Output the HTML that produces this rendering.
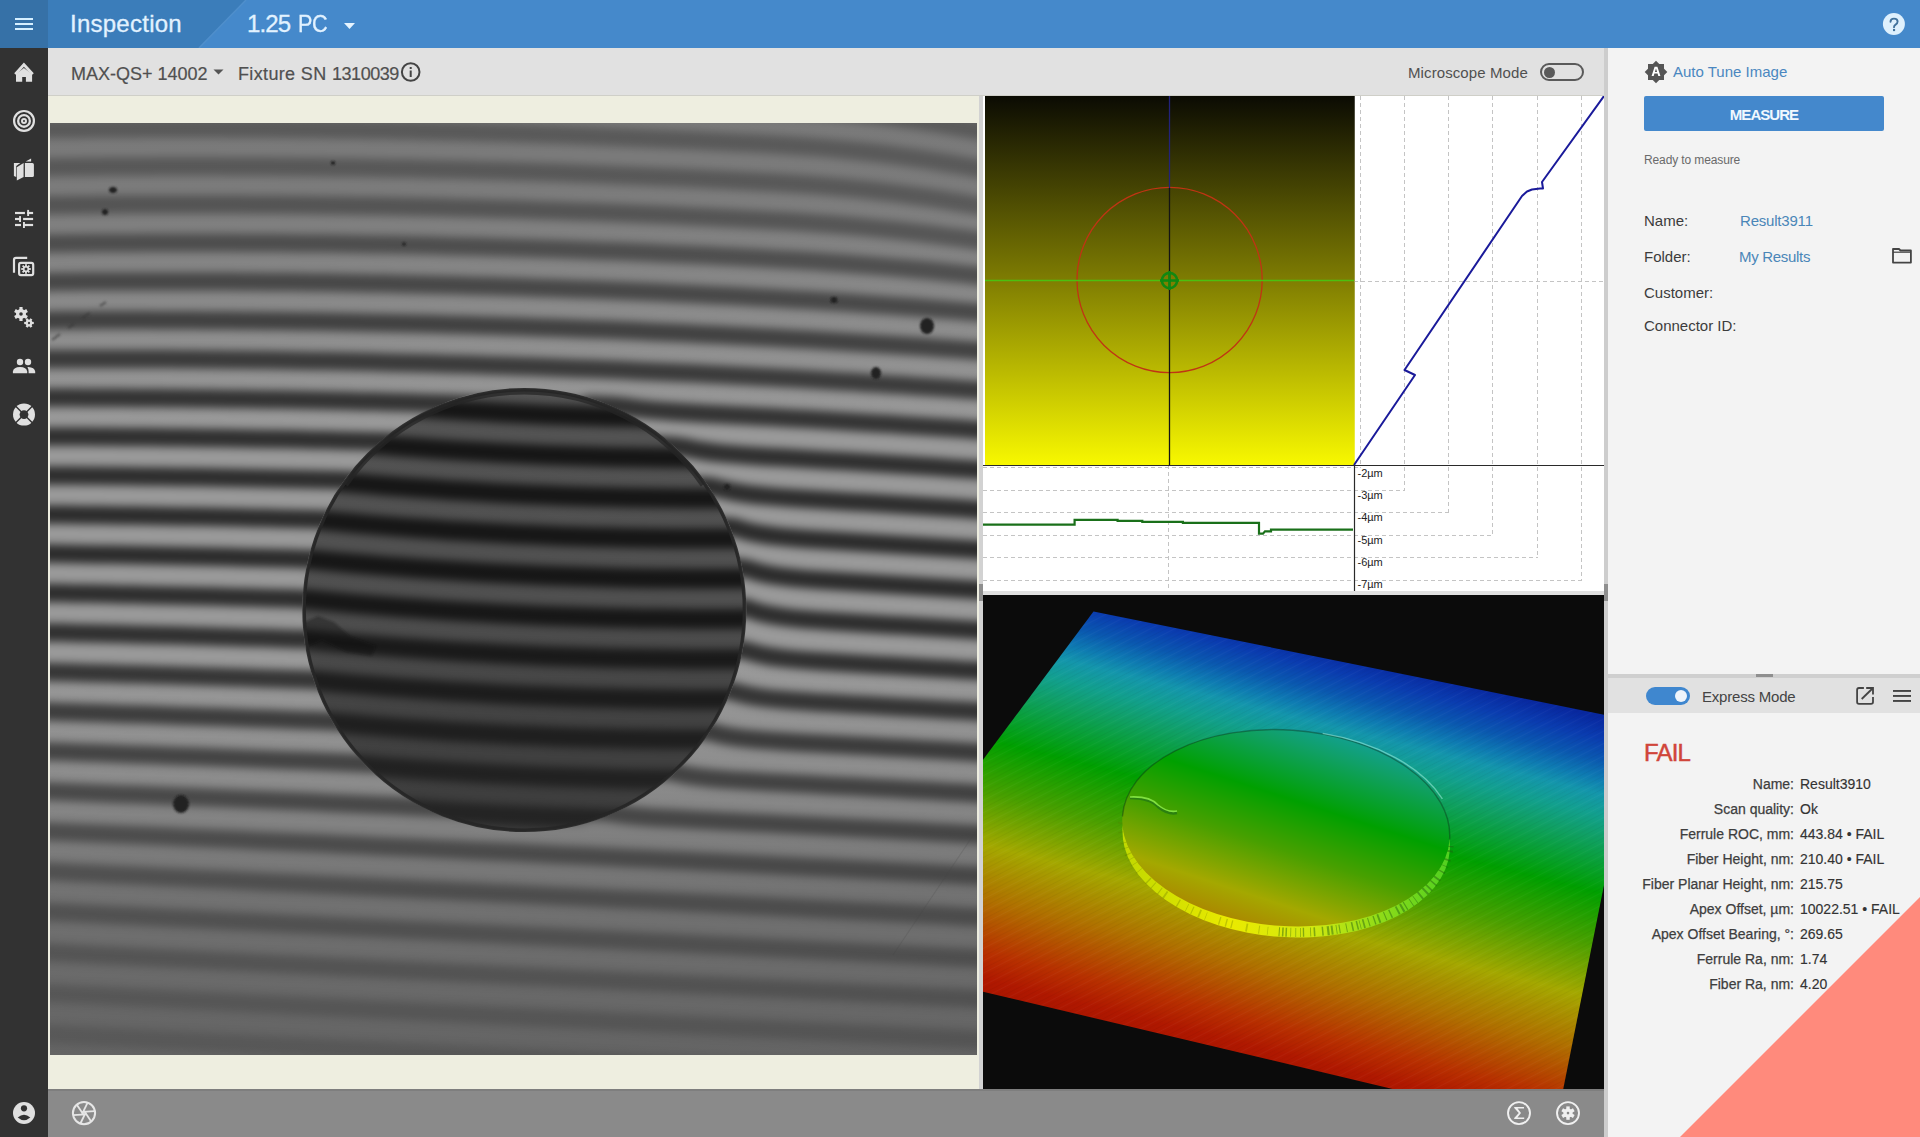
<!DOCTYPE html>
<html><head><meta charset="utf-8">
<style>
*{box-sizing:border-box;margin:0;padding:0}
html,body{width:1920px;height:1137px;overflow:hidden;background:#f3f3f3;font-family:"Liberation Sans",sans-serif}
.a{position:absolute}
.t{position:absolute;white-space:nowrap;line-height:1}
</style></head><body>
<!-- top bar -->
<div class="a" style="left:0;top:0;width:1920px;height:48px;background:#4589cb"></div>
<svg class="a" style="left:0;top:0" width="260" height="48"><polygon points="0,0 246,0 199,48 0,48" fill="#3b7dba"/><line x1="246" y1="0" x2="199" y2="48" stroke="#4f8fcc" stroke-width="1.5"/><rect x="0" y="0" width="48" height="48" fill="#3671a7"/>
<rect x="15" y="18" width="18" height="2" fill="#d6efff"/><rect x="15" y="23" width="18" height="2" fill="#d6efff"/><rect x="15" y="28" width="18" height="2" fill="#d6efff"/></svg>
<div class="t" style="left:70px;top:12px;font-size:24px;letter-spacing:0.25px;color:#e2f2ff;-webkit-text-stroke:0.3px #e2f2ff">Inspection</div>
<div class="t" style="left:247px;top:12px;font-size:24px;letter-spacing:-0.9px;color:#e2f2ff;-webkit-text-stroke:0.3px #e2f2ff">1.25</div><div class="t" style="left:297.5px;top:12px;font-size:24px;letter-spacing:-0.5px;transform:scaleX(0.9);transform-origin:0 0;color:#e2f2ff;-webkit-text-stroke:0.3px #e2f2ff">PC</div>
<svg class="a" style="left:344px;top:23px" width="12" height="7"><polygon points="0,0 11,0 5.5,6" fill="#e6f4ff"/></svg>
<svg class="a" style="left:1882px;top:13px" width="24" height="24" viewBox="1882 13 24 24"><circle cx="1893.9" cy="24" r="11" fill="#def0fd"/><path d="M1890.5,21.8 Q1890.6,18.6 1894,18.6 Q1897.6,18.6 1897.6,21.6 Q1897.6,23.4 1895.6,24.6 Q1894,25.6 1894,27.2" fill="none" stroke="#41719c" stroke-width="1.9" stroke-linecap="round"/><rect x="1893" y="29" width="2.1" height="2.1" fill="#41719c"/></svg>

<!-- sidebar -->
<div class="a" style="left:0;top:48px;width:48px;height:1089px;background:#323232"></div>

<!-- sub header -->
<div class="a" style="left:48px;top:48px;width:1556px;height:48px;background:#e1e1e1;border-bottom:1px solid #cfcfc8"></div>
<div class="t" style="left:71px;top:65px;font-size:18px;color:#505050;-webkit-text-stroke:0.2px #505050">MAX-QS+ 14002</div>
<svg class="a" style="left:213px;top:69px" width="12" height="7"><polygon points="0.5,0.5 10.5,0.5 5.5,5.5" fill="#555"/></svg>
<div class="t" style="left:238px;top:65px;font-size:18px;letter-spacing:0.35px;color:#505050;-webkit-text-stroke:0.2px #505050">Fixture SN</div>
<div class="t" style="left:332px;top:65px;font-size:18px;letter-spacing:-0.45px;color:#505050;-webkit-text-stroke:0.2px #505050">1310039</div>
<svg class="a" style="left:399px;top:61px" width="24" height="24"><circle cx="11.7" cy="11" r="8.8" fill="none" stroke="#444" stroke-width="2"/><rect x="10.7" y="9.5" width="2" height="6.5" fill="#444"/><rect x="10.7" y="6" width="2" height="2" fill="#444"/></svg>
<div class="t" style="left:1408px;top:65px;font-size:15px;letter-spacing:0.1px;color:#505050">Microscope Mode</div>
<div class="a" style="left:1540px;top:63px;width:44px;height:18px;border:2px solid #5a5a5a;border-radius:9px"></div>
<div class="a" style="left:1544px;top:67px;width:11px;height:11px;background:#5a5a5a;border-radius:50%"></div>

<!-- cream image area -->
<div class="a" style="left:48px;top:96px;width:931px;height:993px;background:#eeeee0"></div>
<!--INTERF--><svg class="a" style="left:50px;top:123px" width="927" height="932" viewBox="50 123 927 932">
<defs>
<filter id="bl" x="-2%" y="-5%" width="104%" height="110%"><feGaussianBlur stdDeviation="4.4"/></filter>
<filter id="bl2" x="-50%" y="-50%" width="200%" height="200%"><feGaussianBlur stdDeviation="1"/></filter>
<linearGradient id="ibg" gradientUnits="userSpaceOnUse" x1="0" y1="123" x2="0" y2="1055"><stop offset="0.000" stop-color="rgb(122,122,122)"/><stop offset="0.072" stop-color="rgb(124,124,124)"/><stop offset="0.190" stop-color="rgb(138,138,138)"/><stop offset="0.324" stop-color="rgb(154,154,154)"/><stop offset="0.447" stop-color="rgb(154,154,154)"/><stop offset="0.576" stop-color="rgb(154,154,154)"/><stop offset="0.705" stop-color="rgb(140,140,140)"/><stop offset="0.828" stop-color="rgb(114,114,114)"/><stop offset="0.941" stop-color="rgb(104,104,104)"/><stop offset="1.000" stop-color="rgb(100,100,100)"/></linearGradient>
<clipPath id="fib"><circle cx="524.3" cy="610" r="221"/></clipPath>
<mask id="outm"><rect x="50" y="123" width="927" height="932" fill="#fff"/><circle cx="524.3" cy="610" r="222" fill="#000"/></mask>
<linearGradient id="fbg" gradientUnits="userSpaceOnUse" x1="0" y1="388" x2="0" y2="832"><stop offset="0.000" stop-color="rgb(84,84,84)"/><stop offset="0.477" stop-color="rgb(80,80,80)"/><stop offset="0.748" stop-color="rgb(66,66,66)"/><stop offset="1.000" stop-color="rgb(60,60,60)"/></linearGradient>
</defs>
<rect x="50" y="123" width="927" height="932" fill="url(#ibg)"/>
<g mask="url(#outm)"><g filter="url(#bl)" fill="none" stroke="#000" stroke-width="18.5"><polyline points="38,53.6 50,53.5 62,53.3 74,53.2 86,53.1 98,53.0 110,52.9 122,52.8 134,52.7 146,52.7 158,52.6 170,52.6 182,52.6 194,52.6 206,52.6 218,52.6 230,52.7 242,52.7 254,52.8 266,52.9 278,53.0 290,53.1 302,53.2 314,53.4 326,53.5 338,53.7 350,53.9 362,54.0 374,54.3 386,54.5 398,54.7 410,54.9 422,55.2 434,55.5 446,55.8 458,56.1 470,56.4 482,56.7 494,57.0 506,57.4 518,57.8 530,58.1 542,58.5 554,59.0 566,59.4 578,59.8 590,60.3 602,60.7 614,61.2 626,61.7 638,62.2 650,62.7 662,63.2 674,63.8 686,64.3 698,64.9 710,65.5 722,66.1 734,66.7 746,67.3 758,68.0 770,68.6 782,69.3 794,70.0 806,70.8 818,71.7 830,72.7 842,73.8 854,75.0 866,76.3 878,77.7 890,79.1 902,80.7 914,82.3 926,84.1 938,85.9 950,87.8 962,89.8 974,91.9 986,94.1" stroke-opacity="0.264"/><polyline points="38,91.4 50,91.2 62,91.1 74,91.0 86,90.8 98,90.7 110,90.6 122,90.6 134,90.5 146,90.4 158,90.4 170,90.4 182,90.4 194,90.4 206,90.4 218,90.4 230,90.5 242,90.5 254,90.6 266,90.7 278,90.8 290,90.9 302,91.0 314,91.1 326,91.3 338,91.5 350,91.6 362,91.8 374,92.0 386,92.2 398,92.5 410,92.7 422,93.0 434,93.3 446,93.5 458,93.8 470,94.2 482,94.5 494,94.8 506,95.2 518,95.5 530,95.9 542,96.3 554,96.7 566,97.1 578,97.6 590,98.0 602,98.5 614,99.0 626,99.5 638,100.0 650,100.5 662,101.0 674,101.5 686,102.1 698,102.7 710,103.3 722,103.9 734,104.5 746,105.1 758,105.7 770,106.4 782,107.0 794,107.8 806,108.6 818,109.5 830,110.5 842,111.6 854,112.8 866,114.1 878,115.4 890,116.9 902,118.5 914,120.1 926,121.8 938,123.7 950,125.6 962,127.6 974,129.7 986,131.9" stroke-opacity="0.264"/><polyline points="38,129.3 50,129.1 62,129.0 74,128.9 86,128.7 98,128.6 110,128.5 122,128.5 134,128.4 146,128.3 158,128.3 170,128.3 182,128.3 194,128.3 206,128.3 218,128.3 230,128.4 242,128.4 254,128.5 266,128.6 278,128.7 290,128.8 302,128.9 314,129.0 326,129.2 338,129.4 350,129.5 362,129.7 374,129.9 386,130.1 398,130.4 410,130.6 422,130.9 434,131.2 446,131.4 458,131.7 470,132.1 482,132.4 494,132.7 506,133.1 518,133.4 530,133.8 542,134.2 554,134.6 566,135.0 578,135.5 590,135.9 602,136.4 614,136.9 626,137.4 638,137.9 650,138.4 662,138.9 674,139.4 686,140.0 698,140.6 710,141.2 722,141.8 734,142.4 746,143.0 758,143.6 770,144.3 782,144.9 794,145.7 806,146.5 818,147.4 830,148.4 842,149.5 854,150.7 866,152.0 878,153.3 890,154.8 902,156.4 914,158.0 926,159.7 938,161.6 950,163.5 962,165.5 974,167.6 986,169.8" stroke-opacity="0.269"/><polyline points="38,167.3 50,167.2 62,167.0 74,166.9 86,166.8 98,166.7 110,166.6 122,166.5 134,166.4 146,166.4 158,166.3 170,166.3 182,166.3 194,166.3 206,166.3 218,166.3 230,166.4 242,166.4 254,166.5 266,166.6 278,166.7 290,166.8 302,166.9 314,167.1 326,167.2 338,167.4 350,167.6 362,167.7 374,168.0 386,168.2 398,168.4 410,168.6 422,168.9 434,169.2 446,169.5 458,169.8 470,170.1 482,170.4 494,170.7 506,171.1 518,171.5 530,171.8 542,172.2 554,172.6 566,173.1 578,173.5 590,174.0 602,174.4 614,174.9 626,175.4 638,175.9 650,176.4 662,176.9 674,177.5 686,178.0 698,178.6 710,179.2 722,179.8 734,180.4 746,181.0 758,181.7 770,182.3 782,183.0 794,183.7 806,184.5 818,185.4 830,186.4 842,187.5 854,188.6 866,189.9 878,191.2 890,192.6 902,194.2 914,195.8 926,197.4 938,199.2 950,201.1 962,203.0 974,205.0 986,207.2" stroke-opacity="0.286"/><polyline points="38,205.5 50,205.3 62,205.2 74,205.0 86,204.9 98,204.8 110,204.7 122,204.6 134,204.6 146,204.5 158,204.5 170,204.5 182,204.5 194,204.5 206,204.5 218,204.5 230,204.5 242,204.6 254,204.7 266,204.7 278,204.8 290,205.0 302,205.1 314,205.2 326,205.4 338,205.5 350,205.7 362,205.9 374,206.1 386,206.3 398,206.6 410,206.8 422,207.1 434,207.3 446,207.6 458,207.9 470,208.2 482,208.6 494,208.9 506,209.3 518,209.6 530,210.0 542,210.4 554,210.8 566,211.2 578,211.7 590,212.1 602,212.6 614,213.0 626,213.5 638,214.0 650,214.6 662,215.1 674,215.6 686,216.2 698,216.8 710,217.3 722,217.9 734,218.5 746,219.2 758,219.8 770,220.5 782,221.1 794,221.8 806,222.6 818,223.4 830,224.3 842,225.3 854,226.3 866,227.4 878,228.6 890,229.8 902,231.0 914,232.4 926,233.8 938,235.2 950,236.8 962,238.3 974,240.0 986,241.7" stroke-opacity="0.333"/><polyline points="38,243.8 50,243.6 62,243.5 74,243.3 86,243.2 98,243.1 110,243.0 122,242.9 134,242.9 146,242.8 158,242.8 170,242.7 182,242.7 194,242.7 206,242.7 218,242.8 230,242.8 242,242.9 254,242.9 266,243.0 278,243.1 290,243.2 302,243.4 314,243.5 326,243.6 338,243.8 350,244.0 362,244.2 374,244.4 386,244.6 398,244.8 410,245.1 422,245.3 434,245.6 446,245.9 458,246.2 470,246.5 482,246.8 494,247.2 506,247.5 518,247.9 530,248.3 542,248.7 554,249.1 566,249.5 578,249.9 590,250.4 602,250.9 614,251.3 626,251.8 638,252.3 650,252.8 662,253.4 674,253.9 686,254.5 698,255.0 710,255.6 722,256.2 734,256.8 746,257.5 758,258.1 770,258.7 782,259.4 794,260.1 806,260.8 818,261.6 830,262.4 842,263.3 854,264.2 866,265.1 878,266.1 890,267.1 902,268.1 914,269.2 926,270.3 938,271.5 950,272.7 962,273.9 974,275.2 986,276.5" stroke-opacity="0.407"/><polyline points="38,282.1 50,281.9 62,281.8 74,281.7 86,281.6 98,281.6 110,281.5 122,281.4 134,281.4 146,281.4 158,281.4 170,281.4 182,281.4 194,281.4 206,281.5 218,281.5 230,281.6 242,281.7 254,281.8 266,281.9 278,282.0 290,282.1 302,282.3 314,282.4 326,282.6 338,282.8 350,283.0 362,283.2 374,283.4 386,283.6 398,283.9 410,284.2 422,284.4 434,284.7 446,285.0 458,285.3 470,285.7 482,286.0 494,286.3 506,286.7 518,287.1 530,287.5 542,287.9 554,288.3 566,288.7 578,289.2 590,289.6 602,290.1 614,290.6 626,291.1 638,291.6 650,292.1 662,292.6 674,293.2 686,293.7 698,294.3 710,294.9 722,295.5 734,296.1 746,296.7 758,297.4 770,298.0 782,298.7 794,299.4 806,300.1 818,300.8 830,301.5 842,302.3 854,303.1 866,303.9 878,304.7 890,305.6 902,306.4 914,307.3 926,308.2 938,309.2 950,310.1 962,311.1 974,312.1 986,313.1" stroke-opacity="0.476"/><polyline points="38,320.4 50,320.4 62,320.3 74,320.2 86,320.2 98,320.1 110,320.1 122,320.1 134,320.1 146,320.1 158,320.2 170,320.2 182,320.2 194,320.3 206,320.4 218,320.5 230,320.6 242,320.7 254,320.8 266,320.9 278,321.1 290,321.2 302,321.4 314,321.6 326,321.8 338,322.0 350,322.2 362,322.4 374,322.7 386,322.9 398,323.2 410,323.5 422,323.8 434,324.1 446,324.4 458,324.7 470,325.1 482,325.4 494,325.8 506,326.2 518,326.6 530,327.0 542,327.4 554,327.8 566,328.3 578,328.7 590,329.2 602,329.6 614,330.1 626,330.6 638,331.1 650,331.7 662,332.2 674,332.8 686,333.3 698,333.9 710,334.5 722,335.1 734,335.7 746,336.3 758,336.9 770,337.6 782,338.2 794,338.9 806,339.6 818,340.3 830,341.0 842,341.7 854,342.5 866,343.2 878,344.0 890,344.7 902,345.5 914,346.3 926,347.1 938,347.9 950,348.7 962,349.6 974,350.4 986,351.3" stroke-opacity="0.541"/><polyline points="38,359.0 50,358.9 62,358.9 74,358.9 86,358.9 98,358.9 110,358.9 122,358.9 134,358.9 146,359.0 158,359.1 170,359.1 182,359.2 194,359.3 206,359.4 218,359.5 230,359.7 242,359.8 254,360.0 266,360.1 278,360.3 290,360.5 302,360.7 314,360.9 326,361.1 338,361.3 350,361.6 362,361.8 374,362.1 386,362.4 398,362.7 410,363.0 422,363.3 434,363.6 446,363.9 458,364.3 470,364.6 482,365.0 494,365.4 506,365.8 518,366.2 530,366.6 542,367.0 554,367.5 566,367.9 578,368.4 590,368.8 602,369.3 614,369.8 626,370.3 638,370.9 650,371.4 662,371.9 674,372.5 686,373.0 698,373.6 710,374.2 722,374.8 734,375.4 746,376.0 758,376.7 770,377.3 782,378.0 794,378.6 806,379.3 818,380.0 830,380.7 842,381.4 854,382.1 866,382.9 878,383.6 890,384.4 902,385.1 914,385.9 926,386.7 938,387.5 950,388.3 962,389.2 974,390.0 986,390.8" stroke-opacity="0.601"/><polyline points="38,397.6 50,397.6 62,397.6 74,397.6 86,397.7 98,397.7 110,397.8 122,397.8 134,397.9 146,398.0 158,398.1 170,398.2 182,398.3 194,398.4 206,398.6 218,398.7 230,398.9 242,399.1 254,399.2 266,399.4 278,399.6 290,399.8 302,400.1 314,400.3 326,400.6 338,400.8 350,401.1 362,401.4 374,401.6 386,401.9 398,402.2 410,402.6 422,402.9 434,403.2 446,403.6 458,404.0 470,404.3 482,404.7 494,405.1 506,405.5 518,405.9 530,406.4 542,406.8 554,407.2 566,407.7 578,408.2 590,404.9 602,405.3 614,405.8 626,407.0 638,408.6 650,409.9 662,410.9 674,411.8 686,412.5 698,413.2 710,413.9 722,414.6 734,415.2 746,415.8 758,416.5 770,417.1 782,417.8 794,418.4 806,419.1 818,419.8 830,420.5 842,421.2 854,421.9 866,422.7 878,423.4 890,424.1 902,424.9 914,425.7 926,426.4 938,427.2 950,428.0 962,428.8 974,429.7 986,430.5" stroke-opacity="0.658"/><polyline points="38,436.4 50,436.4 62,436.5 74,436.5 86,436.6 98,436.7 110,436.8 122,436.9 134,437.0 146,437.1 158,437.2 170,437.4 182,437.5 194,437.7 206,437.9 218,438.0 230,438.2 242,438.4 254,438.7 266,438.9 278,439.1 290,439.3 302,439.6 314,439.9 326,440.1 338,440.4 350,440.7 362,441.0 374,441.3 386,441.6 398,442.0 410,442.3 422,442.6 434,443.0 446,443.4 458,443.8 470,444.1 482,444.5 494,445.0 506,445.4 518,445.8 530,446.2 542,446.7 554,447.2 566,447.6 578,448.1 590,448.6 602,449.1 614,449.6 626,450.1 638,450.6 650,444.9 662,445.4 674,446.0 686,447.7 698,450.2 710,452.0 722,453.4 734,454.4 746,455.4 758,456.2 770,456.9 782,457.6 794,458.3 806,459.0 818,459.7 830,460.4 842,461.1 854,461.8 866,462.6 878,463.3 890,464.0 902,464.8 914,465.5 926,466.3 938,467.1 950,467.9 962,468.7 974,469.5 986,470.3" stroke-opacity="0.690"/><polyline points="38,475.3 50,475.4 62,475.4 74,475.6 86,475.7 98,475.8 110,475.9 122,476.1 134,476.2 146,476.4 158,476.5 170,476.7 182,476.9 194,477.1 206,477.3 218,477.5 230,477.7 242,478.0 254,478.2 266,478.4 278,478.7 290,479.0 302,479.3 314,479.5 326,479.8 338,480.1 350,480.5 362,480.8 374,481.1 386,481.4 398,481.8 410,482.2 422,482.5 434,482.9 446,483.3 458,483.7 470,484.1 482,484.5 494,484.9 506,485.4 518,485.8 530,486.3 542,486.7 554,487.2 566,487.7 578,488.2 590,488.7 602,489.2 614,489.7 626,490.2 638,490.7 650,491.3 662,491.8 674,492.4 686,485.3 698,485.9 710,486.5 722,489.2 734,491.9 746,493.9 758,495.3 770,496.4 782,497.4 794,498.2 806,499.0 818,499.7 830,500.5 842,501.2 854,501.9 866,502.6 878,503.3 890,504.1 902,504.8 914,505.5 926,506.3 938,507.1 950,507.8 962,508.6 974,509.4 986,510.2" stroke-opacity="0.703"/><polyline points="38,514.3 50,514.4 62,514.6 74,514.7 86,514.9 98,515.0 110,515.2 122,515.4 134,515.5 146,515.7 158,515.9 170,516.2 182,516.4 194,516.6 206,516.8 218,517.1 230,517.3 242,517.6 254,517.9 266,518.1 278,518.4 290,518.7 302,519.0 314,519.3 326,519.7 338,520.0 350,520.3 362,520.7 374,521.0 386,521.4 398,521.8 410,522.1 422,522.5 434,522.9 446,523.3 458,523.7 470,524.2 482,524.6 494,525.0 506,525.5 518,525.9 530,526.4 542,526.9 554,527.4 566,527.8 578,528.3 590,528.9 602,529.4 614,529.9 626,530.4 638,531.0 650,531.5 662,532.1 674,532.6 686,533.2 698,533.8 710,525.9 722,526.5 734,527.3 746,531.1 758,533.7 770,535.5 782,536.9 794,538.0 806,539.0 818,539.8 830,540.6 842,541.3 854,542.0 866,542.8 878,543.5 890,544.2 902,544.9 914,545.7 926,546.4 938,547.2 950,547.9 962,548.7 974,549.5 986,550.3" stroke-opacity="0.715"/><polyline points="38,553.4 50,553.6 62,553.8 74,554.0 86,554.2 98,554.4 110,554.6 122,554.8 134,555.0 146,555.2 158,555.5 170,555.7 182,556.0 194,556.2 206,556.5 218,556.8 230,557.1 242,557.4 254,557.7 266,558.0 278,558.3 290,558.6 302,558.9 314,559.3 326,559.6 338,560.0 350,560.3 362,560.7 374,561.1 386,561.5 398,561.9 410,562.3 422,562.7 434,563.1 446,563.5 458,563.9 470,564.4 482,564.8 494,565.3 506,565.7 518,566.2 530,566.7 542,567.2 554,567.7 566,568.2 578,568.7 590,569.2 602,569.7 614,570.2 626,570.8 638,571.3 650,571.9 662,572.4 674,573.0 686,573.6 698,574.2 710,574.7 722,566.4 734,567.1 746,568.5 758,572.2 770,574.8 782,576.6 794,578.0 806,579.1 818,580.0 830,580.8 842,581.6 854,582.3 866,583.1 878,583.8 890,584.5 902,585.2 914,585.9 926,586.7 938,587.4 950,588.2 962,588.9 974,589.7 986,590.4" stroke-opacity="0.712"/><polyline points="38,592.7 50,592.9 62,593.1 74,593.4 86,593.6 98,593.8 110,594.1 122,594.4 134,594.6 146,594.9 158,595.2 170,595.4 182,595.7 194,596.0 206,596.3 218,596.6 230,596.9 242,597.3 254,597.6 266,597.9 278,598.3 290,598.6 302,599.0 314,599.4 326,599.7 338,600.1 350,600.5 362,600.9 374,601.3 386,601.7 398,602.1 410,602.5 422,602.9 434,603.4 446,603.8 458,604.3 470,604.7 482,605.2 494,605.6 506,606.1 518,606.6 530,607.1 542,607.6 554,608.1 566,608.6 578,609.1 590,609.6 602,610.2 614,610.7 626,611.2 638,611.8 650,612.4 662,612.9 674,613.5 686,614.1 698,614.6 710,615.2 722,606.8 734,607.4 746,608.1 758,612.2 770,615.0 782,616.9 794,618.4 806,619.5 818,620.4 830,621.3 842,622.0 854,622.8 866,623.5 878,624.2 890,624.9 902,625.6 914,626.3 926,627.1 938,627.8 950,628.5 962,629.3 974,630.0 986,630.8" stroke-opacity="0.700"/><polyline points="38,632.1 50,632.4 62,632.6 74,632.9 86,633.2 98,633.5 110,633.8 122,634.1 134,634.4 146,634.7 158,635.0 170,635.3 182,635.6 194,636.0 206,636.3 218,636.7 230,637.0 242,637.4 254,637.7 266,638.1 278,638.5 290,638.9 302,639.2 314,639.6 326,640.0 338,640.4 350,640.9 362,641.3 374,641.7 386,642.1 398,642.6 410,643.0 422,643.5 434,643.9 446,644.4 458,644.8 470,645.3 482,645.8 494,646.3 506,646.8 518,647.3 530,647.8 542,648.3 554,648.8 566,649.3 578,649.8 590,650.4 602,650.9 614,651.4 626,652.0 638,652.6 650,653.1 662,653.7 674,654.3 686,654.8 698,655.4 710,656.0 722,647.8 734,648.4 746,650.7 758,654.1 770,656.5 782,658.1 794,659.4 806,660.4 818,661.3 830,662.1 842,662.8 854,663.5 866,664.2 878,664.9 890,665.6 902,666.3 914,667.0 926,667.7 938,668.4 950,669.1 962,669.9 974,670.6 986,671.3" stroke-opacity="0.688"/><polyline points="38,671.6 50,671.9 62,672.2 74,672.6 86,672.9 98,673.2 110,673.5 122,673.9 134,674.2 146,674.6 158,675.0 170,675.3 182,675.7 194,676.1 206,676.4 218,676.8 230,677.2 242,677.6 254,678.0 266,678.4 278,678.8 290,679.2 302,679.6 314,680.1 326,680.5 338,680.9 350,681.4 362,681.8 374,682.3 386,682.7 398,683.2 410,683.7 422,684.1 434,684.6 446,685.1 458,685.6 470,686.1 482,686.6 494,687.1 506,687.6 518,688.1 530,688.6 542,689.1 554,689.6 566,690.2 578,690.7 590,691.3 602,691.8 614,692.4 626,692.9 638,693.5 650,694.0 662,694.6 674,695.2 686,695.8 698,696.4 710,688.7 722,689.3 734,691.7 746,694.9 758,697.1 770,698.6 782,699.8 794,700.8 806,701.6 818,702.4 830,703.1 842,703.8 854,704.5 866,705.1 878,705.8 890,706.5 902,707.2 914,707.8 926,708.5 938,709.2 950,709.9 962,710.6 974,711.3 986,712.0" stroke-opacity="0.647"/><polyline points="38,711.2 50,711.6 62,712.0 74,712.3 86,712.7 98,713.1 110,713.5 122,713.9 134,714.2 146,714.6 158,715.0 170,715.4 182,715.9 194,716.3 206,716.7 218,717.1 230,717.5 242,718.0 254,718.4 266,718.8 278,719.3 290,719.7 302,720.2 314,720.6 326,721.1 338,721.6 350,722.0 362,722.5 374,723.0 386,723.5 398,723.9 410,724.4 422,724.9 434,725.4 446,725.9 458,726.4 470,726.9 482,727.5 494,728.0 506,728.5 518,729.0 530,729.6 542,730.1 554,730.6 566,731.2 578,731.7 590,732.3 602,732.8 614,733.4 626,734.0 638,734.5 650,735.1 662,735.7 674,736.3 686,729.5 698,730.1 710,731.9 722,735.0 734,737.1 746,738.6 758,739.7 770,740.6 782,741.4 794,742.2 806,742.9 818,743.5 830,744.2 842,744.8 854,745.5 866,746.1 878,746.8 890,747.5 902,748.1 914,748.8 926,749.5 938,750.1 950,750.8 962,751.5 974,752.2 986,752.9" stroke-opacity="0.588"/><polyline points="38,751.0 50,751.4 62,751.8 74,752.2 86,752.7 98,753.1 110,753.5 122,753.9 134,754.4 146,754.8 158,755.3 170,755.7 182,756.2 194,756.6 206,757.1 218,757.5 230,758.0 242,758.5 254,758.9 266,759.4 278,759.9 290,760.4 302,760.8 314,761.3 326,761.8 338,762.3 350,762.8 362,763.3 374,763.8 386,764.3 398,764.8 410,765.3 422,765.9 434,766.4 446,766.9 458,767.4 470,767.9 482,768.5 494,769.0 506,769.6 518,770.1 530,770.6 542,771.2 554,771.7 566,772.3 578,772.9 590,773.4 602,774.0 614,774.6 626,775.1 638,775.7 650,770.3 662,770.9 674,772.4 686,775.1 698,776.9 710,778.2 722,779.2 734,780.1 746,780.8 758,781.5 770,782.2 782,782.8 794,783.5 806,784.1 818,784.7 830,785.4 842,786.0 854,786.6 866,787.3 878,787.9 890,788.6 902,789.2 914,789.9 926,790.5 938,791.2 950,791.9 962,792.5 974,793.2 986,793.9" stroke-opacity="0.524"/><polyline points="38,790.9 50,791.3 62,791.8 74,792.3 86,792.7 98,793.2 110,793.7 122,794.2 134,794.6 146,795.1 158,795.6 170,796.1 182,796.6 194,797.1 206,797.6 218,798.1 230,798.6 242,799.1 254,799.6 266,800.1 278,800.6 290,801.1 302,801.6 314,802.1 326,802.7 338,803.2 350,803.7 362,804.2 374,804.8 386,805.3 398,805.8 410,806.4 422,806.9 434,807.5 446,808.0 458,808.5 470,809.1 482,809.6 494,810.2 506,810.7 518,811.3 530,811.9 542,812.4 554,813.0 566,813.6 578,814.1 590,811.2 602,811.9 614,813.3 626,815.0 638,816.2 650,817.2 662,817.9 674,818.6 686,819.3 698,819.9 710,820.5 722,821.2 734,821.8 746,822.4 758,823.0 770,823.6 782,824.2 794,824.8 806,825.4 818,826.1 830,826.7 842,827.3 854,827.9 866,828.6 878,829.2 890,829.8 902,830.5 914,831.1 926,831.7 938,832.4 950,833.0 962,833.7 974,834.3 986,835.0" stroke-opacity="0.465"/><polyline points="38,830.9 50,831.4 62,831.9 74,832.4 86,832.9 98,833.5 110,834.0 122,834.5 134,835.0 146,835.6 158,836.1 170,836.6 182,837.2 194,837.7 206,838.2 218,838.8 230,839.3 242,839.8 254,840.4 266,840.9 278,841.5 290,842.0 302,842.5 314,843.1 326,843.6 338,844.2 350,844.7 362,845.3 374,845.9 386,846.4 398,847.0 410,847.5 422,848.1 434,848.7 446,849.2 458,849.8 470,850.4 482,850.9 494,851.5 506,852.1 518,852.6 530,853.2 542,853.8 554,854.4 566,855.0 578,855.5 590,856.1 602,856.7 614,857.3 626,857.9 638,858.5 650,859.1 662,859.7 674,860.2 686,860.8 698,861.4 710,862.0 722,862.6 734,863.2 746,863.8 758,864.4 770,865.0 782,865.7 794,866.3 806,866.9 818,867.5 830,868.1 842,868.7 854,869.3 866,869.9 878,870.6 890,871.2 902,871.8 914,872.4 926,873.1 938,873.7 950,874.3 962,874.9 974,875.6 986,876.2" stroke-opacity="0.400"/><polyline points="38,871.0 50,871.6 62,872.1 74,872.7 86,873.3 98,873.8 110,874.4 122,875.0 134,875.6 146,876.1 158,876.7 170,877.3 182,877.8 194,878.4 206,879.0 218,879.6 230,880.1 242,880.7 254,881.3 266,881.9 278,882.4 290,883.0 302,883.6 314,884.2 326,884.8 338,885.3 350,885.9 362,886.5 374,887.1 386,887.7 398,888.2 410,888.8 422,889.4 434,890.0 446,890.6 458,891.2 470,891.8 482,892.3 494,892.9 506,893.5 518,894.1 530,894.7 542,895.3 554,895.9 566,896.5 578,897.1 590,897.7 602,898.3 614,898.9 626,899.4 638,900.0 650,900.6 662,901.2 674,901.8 686,902.4 698,903.0 710,903.6 722,904.2 734,904.8 746,905.4 758,906.0 770,906.6 782,907.2 794,907.8 806,908.4 818,909.1 830,909.7 842,910.3 854,910.9 866,911.5 878,912.1 890,912.7 902,913.3 914,913.9 926,914.5 938,915.1 950,915.7 962,916.4 974,917.0 986,917.6" stroke-opacity="0.324"/><polyline points="38,911.3 50,911.9 62,912.5 74,913.1 86,913.7 98,914.3 110,914.9 122,915.5 134,916.1 146,916.7 158,917.3 170,917.9 182,918.5 194,919.1 206,919.7 218,920.3 230,920.9 242,921.5 254,922.1 266,922.7 278,923.3 290,923.9 302,924.5 314,925.1 326,925.7 338,926.3 350,926.9 362,927.5 374,928.1 386,928.7 398,929.3 410,929.9 422,930.5 434,931.1 446,931.7 458,932.3 470,932.9 482,933.5 494,934.1 506,934.7 518,935.3 530,935.9 542,936.5 554,937.1 566,937.7 578,938.3 590,938.9 602,939.5 614,940.1 626,940.7 638,941.3 650,941.9 662,942.5 674,943.1 686,943.7 698,944.3 710,944.9 722,945.5 734,946.1 746,946.7 758,947.3 770,947.9 782,948.5 794,949.1 806,949.7 818,950.3 830,950.9 842,951.5 854,952.1 866,952.7 878,953.3 890,953.9 902,954.5 914,955.1 926,955.7 938,956.3 950,956.9 962,957.5 974,958.1 986,958.7" stroke-opacity="0.273"/><polyline points="38,951.9 50,952.5 62,953.1 74,953.7 86,954.3 98,954.9 110,955.5 122,956.1 134,956.7 146,957.3 158,957.9 170,958.5 182,959.1 194,959.7 206,960.3 218,960.9 230,961.5 242,962.1 254,962.7 266,963.3 278,963.9 290,964.5 302,965.1 314,965.7 326,966.3 338,966.9 350,967.5 362,968.1 374,968.7 386,969.3 398,969.9 410,970.5 422,971.1 434,971.7 446,972.3 458,972.9 470,973.5 482,974.1 494,974.7 506,975.3 518,975.9 530,976.5 542,977.1 554,977.7 566,978.3 578,978.9 590,979.5 602,980.1 614,980.7 626,981.3 638,981.9 650,982.5 662,983.1 674,983.7 686,984.3 698,984.9 710,985.5 722,986.1 734,986.7 746,987.3 758,987.9 770,988.5 782,989.1 794,989.7 806,990.3 818,990.9 830,991.5 842,992.1 854,992.7 866,993.3 878,993.9 890,994.5 902,995.1 914,995.7 926,996.3 938,996.9 950,997.5 962,998.1 974,998.7 986,999.3" stroke-opacity="0.220"/><polyline points="38,992.6 50,993.2 62,993.8 74,994.4 86,995.0 98,995.6 110,996.2 122,996.8 134,997.4 146,998.0 158,998.6 170,999.2 182,999.8 194,1000.4 206,1001.0 218,1001.6 230,1002.2 242,1002.8 254,1003.4 266,1004.0 278,1004.6 290,1005.2 302,1005.8 314,1006.4 326,1007.0 338,1007.6 350,1008.2 362,1008.8 374,1009.4 386,1010.0 398,1010.6 410,1011.2 422,1011.8 434,1012.4 446,1013.0 458,1013.6 470,1014.2 482,1014.8 494,1015.4 506,1016.0 518,1016.6 530,1017.2 542,1017.8 554,1018.4 566,1019.0 578,1019.6 590,1020.2 602,1020.8 614,1021.4 626,1022.0 638,1022.6 650,1023.2 662,1023.8 674,1024.4 686,1025.0 698,1025.6 710,1026.2 722,1026.8 734,1027.4 746,1028.0 758,1028.6 770,1029.2 782,1029.8 794,1030.4 806,1031.0 818,1031.6 830,1032.2 842,1032.8 854,1033.4 866,1034.0 878,1034.6 890,1035.2 902,1035.8 914,1036.4 926,1037.0 938,1037.6 950,1038.2 962,1038.8 974,1039.4 986,1040.0" stroke-opacity="0.170"/><polyline points="38,1033.4 50,1034.0 62,1034.6 74,1035.2 86,1035.8 98,1036.4 110,1037.0 122,1037.6 134,1038.2 146,1038.8 158,1039.4 170,1040.0 182,1040.6 194,1041.2 206,1041.8 218,1042.4 230,1043.0 242,1043.6 254,1044.2 266,1044.8 278,1045.4 290,1046.0 302,1046.6 314,1047.2 326,1047.8 338,1048.4 350,1049.0 362,1049.6 374,1050.2 386,1050.8 398,1051.4 410,1052.0 422,1052.6 434,1053.2 446,1053.8 458,1054.4 470,1055.0 482,1055.6 494,1056.2 506,1056.8 518,1057.4 530,1058.0 542,1058.6 554,1059.2 566,1059.8 578,1060.4 590,1061.0 602,1061.6 614,1062.2 626,1062.8 638,1063.4 650,1064.0 662,1064.6 674,1065.2 686,1065.8 698,1066.4 710,1067.0 722,1067.6 734,1068.2 746,1068.8 758,1069.4 770,1070.0 782,1070.6 794,1071.2 806,1071.8 818,1072.4 830,1073.0 842,1073.6 854,1074.2 866,1074.8 878,1075.4 890,1076.0 902,1076.6 914,1077.2 926,1077.8 938,1078.4 950,1079.0 962,1079.6 974,1080.2 986,1080.8" stroke-opacity="0.129"/><polyline points="38,1074.3 50,1074.9 62,1075.5 74,1076.1 86,1076.7 98,1077.3 110,1077.9 122,1078.5 134,1079.1 146,1079.7 158,1080.3 170,1080.9 182,1081.5 194,1082.1 206,1082.7 218,1083.3 230,1083.9 242,1084.5 254,1085.1 266,1085.7 278,1086.3 290,1086.9 302,1087.5 314,1088.1 326,1088.7 338,1089.3 350,1089.9 362,1090.5 374,1091.1 386,1091.7 398,1092.3 410,1092.9 422,1093.5 434,1094.1 446,1094.7 458,1095.3 470,1095.9 482,1096.5 494,1097.1 506,1097.7 518,1098.3 530,1098.9 542,1099.5 554,1100.1 566,1100.7 578,1101.3 590,1101.9 602,1102.5 614,1103.1 626,1103.7 638,1104.3 650,1104.9 662,1105.5 674,1106.1 686,1106.7 698,1107.3 710,1107.9 722,1108.5 734,1109.1 746,1109.7 758,1110.3 770,1110.9 782,1111.5 794,1112.1 806,1112.7 818,1113.3 830,1113.9 842,1114.5 854,1115.1 866,1115.7 878,1116.3 890,1116.9 902,1117.5 914,1118.1 926,1118.7 938,1119.3 950,1119.9 962,1120.5 974,1121.1 986,1121.7" stroke-opacity="0.129"/><polyline points="38,1115.4 50,1116.0 62,1116.6 74,1117.2 86,1117.8 98,1118.4 110,1119.0 122,1119.6 134,1120.2 146,1120.8 158,1121.4 170,1122.0 182,1122.6 194,1123.2 206,1123.8 218,1124.4 230,1125.0 242,1125.6 254,1126.2 266,1126.8 278,1127.4 290,1128.0 302,1128.6 314,1129.2 326,1129.8 338,1130.4 350,1131.0 362,1131.6 374,1132.2 386,1132.8 398,1133.4 410,1134.0 422,1134.6 434,1135.2 446,1135.8 458,1136.4 470,1137.0 482,1137.6 494,1138.2 506,1138.8 518,1139.4 530,1140.0 542,1140.6 554,1141.2 566,1141.8 578,1142.4 590,1143.0 602,1143.6 614,1144.2 626,1144.8 638,1145.4 650,1146.0 662,1146.6 674,1147.2 686,1147.8 698,1148.4 710,1149.0 722,1149.6 734,1150.2 746,1150.8 758,1151.4 770,1152.0 782,1152.6 794,1153.2 806,1153.8 818,1154.4 830,1155.0 842,1155.6 854,1156.2 866,1156.8 878,1157.4 890,1158.0 902,1158.6 914,1159.2 926,1159.8 938,1160.4 950,1161.0 962,1161.6 974,1162.2 986,1162.8" stroke-opacity="0.129"/></g></g>
<g clip-path="url(#fib)">
<rect x="300" y="385" width="450" height="450" fill="url(#fbg)"/>
<g filter="url(#bl)" fill="none" stroke="#000" stroke-width="20"><polyline points="290,316.3 306,317.9 322,319.4 338,320.9 354,322.3 370,323.6 386,324.9 402,326.1 418,327.2 434,328.3 450,329.4 466,330.3 482,331.2 498,332.1 514,332.9 530,333.6 546,334.3 562,334.9 578,335.4 594,335.9 610,336.3 626,336.7 642,337.0 658,337.2 674,337.4 690,337.6 706,337.6 722,337.6 738,337.6 754,337.4 770,337.3" stroke-opacity="0.742"/><polyline points="290,356.5 306,358.1 322,359.6 338,361.1 354,362.5 370,363.8 386,365.1 402,366.3 418,367.4 434,368.5 450,369.6 466,370.5 482,371.4 498,372.3 514,373.1 530,373.8 546,374.5 562,375.1 578,375.6 594,376.1 610,376.5 626,376.9 642,377.2 658,377.4 674,377.6 690,377.8 706,377.8 722,377.8 738,377.8 754,377.6 770,377.5" stroke-opacity="0.742"/><polyline points="290,396.7 306,398.3 322,399.8 338,401.3 354,402.7 370,404.0 386,405.3 402,406.5 418,407.6 434,408.7 450,409.8 466,410.7 482,411.6 498,412.5 514,413.3 530,414.0 546,414.7 562,415.3 578,415.8 594,416.3 610,416.7 626,417.1 642,417.4 658,417.6 674,417.8 690,418.0 706,418.0 722,418.0 738,418.0 754,417.8 770,417.7" stroke-opacity="0.740"/><polyline points="290,436.9 306,438.5 322,440.0 338,441.5 354,442.9 370,444.2 386,445.5 402,446.7 418,447.8 434,448.9 450,450.0 466,450.9 482,451.8 498,452.7 514,453.5 530,454.2 546,454.9 562,455.5 578,456.0 594,456.5 610,456.9 626,457.3 642,457.6 658,457.8 674,458.0 690,458.2 706,458.2 722,458.2 738,458.2 754,458.0 770,457.9" stroke-opacity="0.737"/><polyline points="290,477.1 306,478.7 322,480.2 338,481.7 354,483.1 370,484.4 386,485.7 402,486.9 418,488.0 434,489.1 450,490.2 466,491.1 482,492.0 498,492.9 514,493.7 530,494.4 546,495.1 562,495.7 578,496.2 594,496.7 610,497.1 626,497.5 642,497.8 658,498.0 674,498.2 690,498.4 706,498.4 722,498.4 738,498.4 754,498.2 770,498.1" stroke-opacity="0.734"/><polyline points="290,517.3 306,518.9 322,520.4 338,521.9 354,523.3 370,524.6 386,525.9 402,527.1 418,528.2 434,529.3 450,530.4 466,531.3 482,532.2 498,533.1 514,533.9 530,534.6 546,535.3 562,535.9 578,536.4 594,536.9 610,537.3 626,537.7 642,538.0 658,538.2 674,538.4 690,538.6 706,538.6 722,538.6 738,538.6 754,538.4 770,538.3" stroke-opacity="0.731"/><polyline points="290,557.5 306,559.1 322,560.6 338,562.1 354,563.5 370,564.8 386,566.1 402,567.3 418,568.4 434,569.5 450,570.6 466,571.5 482,572.4 498,573.3 514,574.1 530,574.8 546,575.5 562,576.1 578,576.6 594,577.1 610,577.5 626,577.9 642,578.2 658,578.4 674,578.6 690,578.8 706,578.8 722,578.8 738,578.8 754,578.6 770,578.5" stroke-opacity="0.728"/><polyline points="290,597.7 306,599.3 322,600.8 338,602.3 354,603.7 370,605.0 386,606.3 402,607.5 418,608.6 434,609.7 450,610.8 466,611.7 482,612.6 498,613.5 514,614.3 530,615.0 546,615.7 562,616.3 578,616.8 594,617.3 610,617.7 626,618.1 642,618.4 658,618.6 674,618.8 690,619.0 706,619.0 722,619.0 738,619.0 754,618.8 770,618.7" stroke-opacity="0.708"/><polyline points="290,637.9 306,639.5 322,641.0 338,642.5 354,643.9 370,645.2 386,646.5 402,647.7 418,648.8 434,649.9 450,651.0 466,651.9 482,652.8 498,653.7 514,654.5 530,655.2 546,655.9 562,656.5 578,657.0 594,657.5 610,657.9 626,658.3 642,658.6 658,658.8 674,659.0 690,659.2 706,659.2 722,659.2 738,659.2 754,659.0 770,658.9" stroke-opacity="0.655"/><polyline points="290,678.1 306,679.7 322,681.2 338,682.7 354,684.1 370,685.4 386,686.7 402,687.9 418,689.0 434,690.1 450,691.2 466,692.1 482,693.0 498,693.9 514,694.7 530,695.4 546,696.1 562,696.7 578,697.2 594,697.7 610,698.1 626,698.5 642,698.8 658,699.0 674,699.2 690,699.4 706,699.4 722,699.4 738,699.4 754,699.2 770,699.1" stroke-opacity="0.595"/><polyline points="290,718.3 306,719.9 322,721.4 338,722.9 354,724.3 370,725.6 386,726.9 402,728.1 418,729.2 434,730.3 450,731.4 466,732.3 482,733.2 498,734.1 514,734.9 530,735.6 546,736.3 562,736.9 578,737.4 594,737.9 610,738.3 626,738.7 642,739.0 658,739.2 674,739.4 690,739.6 706,739.6 722,739.6 738,739.6 754,739.4 770,739.3" stroke-opacity="0.533"/><polyline points="290,758.5 306,760.1 322,761.6 338,763.1 354,764.5 370,765.8 386,767.1 402,768.3 418,769.4 434,770.5 450,771.6 466,772.5 482,773.4 498,774.3 514,775.1 530,775.8 546,776.5 562,777.1 578,777.6 594,778.1 610,778.5 626,778.9 642,779.2 658,779.4 674,779.6 690,779.8 706,779.8 722,779.8 738,779.8 754,779.6 770,779.5" stroke-opacity="0.478"/><polyline points="290,798.7 306,800.3 322,801.8 338,803.3 354,804.7 370,806.0 386,807.3 402,808.5 418,809.6 434,810.7 450,811.8 466,812.7 482,813.6 498,814.5 514,815.3 530,816.0 546,816.7 562,817.3 578,817.8 594,818.3 610,818.7 626,819.1 642,819.4 658,819.6 674,819.8 690,820.0 706,820.0 722,820.0 738,820.0 754,819.8 770,819.7" stroke-opacity="0.419"/><polyline points="290,838.9 306,840.5 322,842.0 338,843.5 354,844.9 370,846.2 386,847.5 402,848.7 418,849.8 434,850.9 450,852.0 466,852.9 482,853.8 498,854.7 514,855.5 530,856.2 546,856.9 562,857.5 578,858.0 594,858.5 610,858.9 626,859.3 642,859.6 658,859.8 674,860.0 690,860.2 706,860.2 722,860.2 738,860.2 754,860.0 770,859.9" stroke-opacity="0.394"/><polyline points="290,879.1 306,880.7 322,882.2 338,883.7 354,885.1 370,886.4 386,887.7 402,888.9 418,890.0 434,891.1 450,892.2 466,893.1 482,894.0 498,894.9 514,895.7 530,896.4 546,897.1 562,897.7 578,898.2 594,898.7 610,899.1 626,899.5 642,899.8 658,900.0 674,900.2 690,900.4 706,900.4 722,900.4 738,900.4 754,900.2 770,900.1" stroke-opacity="0.394"/></g>
<path d="M300,624 L318,616 L334,622 L350,636 L376,646 L372,656 L346,652 L322,640 L300,650 Z" fill="#111" opacity="0.35" filter="url(#bl2)"/>
</g>
<circle cx="524.3" cy="610" r="220.2" fill="none" stroke="#262626" stroke-width="3.6" opacity="0.92"/>
<circle cx="524.3" cy="610" r="217.5" fill="none" stroke="#262626" stroke-width="4" opacity="0.75" pathLength="360" stroke-dasharray="0 215 110 35"/>
<ellipse cx="927" cy="326" rx="7" ry="8" fill="#222" filter="url(#bl2)"/>
<ellipse cx="876" cy="373" rx="5" ry="6" fill="#222" filter="url(#bl2)"/>
<ellipse cx="834" cy="300" rx="3.5" ry="3" fill="#222" filter="url(#bl2)"/>
<ellipse cx="181" cy="804" rx="8" ry="9" fill="#222" filter="url(#bl2)"/>
<ellipse cx="113" cy="190" rx="4" ry="3" fill="#222" filter="url(#bl2)"/>
<ellipse cx="105" cy="212" rx="3" ry="3" fill="#222" filter="url(#bl2)"/>
<ellipse cx="727" cy="487" rx="3" ry="3" fill="#222" filter="url(#bl2)"/>
<ellipse cx="333" cy="163" rx="2" ry="2" fill="#222" filter="url(#bl2)"/>
<ellipse cx="404" cy="244" rx="2" ry="1.6" fill="#222" filter="url(#bl2)"/>
<path d="M52,340 L60,334 M68,328 L74,324 M82,318 L90,313 M100,306 L106,302" stroke="#333" stroke-width="2.5" opacity="0.5" filter="url(#bl2)"/>
<path d="M978,828 L893,955" stroke="#444" stroke-width="1.2" opacity="0.2"/>
</svg><!--/INTERF-->
<!-- vertical splitter -->
<div class="a" style="left:979px;top:96px;width:4px;height:993px;background:#d2d2d2"></div>

<!-- chart area -->
<svg class="a" style="left:983px;top:96px" width="621" height="495" viewBox="983 96 621 495">
<defs><linearGradient id="yg" x1="0" y1="0" x2="0" y2="1"><stop offset="0" stop-color="#0b0b03"/><stop offset="0.5" stop-color="#7f7d02"/><stop offset="1" stop-color="#f8f800"/></linearGradient></defs>
<rect x="983" y="96" width="621" height="495" fill="#fff"/>
<rect x="985" y="96" width="369.5" height="369" fill="url(#yg)"/>
<line x1="1360.5" y1="96" x2="1360.5" y2="467.5" stroke="#c4c4c4" stroke-width="1" stroke-dasharray="4 3" shape-rendering="crispEdges"/>
<line x1="983" y1="467.5" x2="1360.5" y2="467.5" stroke="#c4c4c4" stroke-width="1" stroke-dasharray="4 3" shape-rendering="crispEdges"/>
<line x1="1404.5" y1="96" x2="1404.5" y2="490.5" stroke="#c4c4c4" stroke-width="1" stroke-dasharray="4 3" shape-rendering="crispEdges"/>
<line x1="983" y1="490.5" x2="1404.5" y2="490.5" stroke="#c4c4c4" stroke-width="1" stroke-dasharray="4 3" shape-rendering="crispEdges"/>
<line x1="1448.5" y1="96" x2="1448.5" y2="512.5" stroke="#c4c4c4" stroke-width="1" stroke-dasharray="4 3" shape-rendering="crispEdges"/>
<line x1="983" y1="512.5" x2="1448.5" y2="512.5" stroke="#c4c4c4" stroke-width="1" stroke-dasharray="4 3" shape-rendering="crispEdges"/>
<line x1="1492.5" y1="96" x2="1492.5" y2="535.5" stroke="#c4c4c4" stroke-width="1" stroke-dasharray="4 3" shape-rendering="crispEdges"/>
<line x1="983" y1="535.5" x2="1492.5" y2="535.5" stroke="#c4c4c4" stroke-width="1" stroke-dasharray="4 3" shape-rendering="crispEdges"/>
<line x1="1537.5" y1="96" x2="1537.5" y2="557.5" stroke="#c4c4c4" stroke-width="1" stroke-dasharray="4 3" shape-rendering="crispEdges"/>
<line x1="983" y1="557.5" x2="1537.5" y2="557.5" stroke="#c4c4c4" stroke-width="1" stroke-dasharray="4 3" shape-rendering="crispEdges"/>
<line x1="1581.5" y1="96" x2="1581.5" y2="580.5" stroke="#c4c4c4" stroke-width="1" stroke-dasharray="4 3" shape-rendering="crispEdges"/>
<line x1="983" y1="580.5" x2="1581.5" y2="580.5" stroke="#c4c4c4" stroke-width="1" stroke-dasharray="4 3" shape-rendering="crispEdges"/>
<line x1="1354" y1="281.5" x2="1604" y2="281.5" stroke="#c4c4c4" stroke-width="1" stroke-dasharray="4 3" shape-rendering="crispEdges"/>
<line x1="1168.5" y1="465" x2="1168.5" y2="591" stroke="#c4c4c4" stroke-width="1" stroke-dasharray="4 3" shape-rendering="crispEdges"/>
<rect x="985" y="96" width="369.5" height="369" fill="url(#yg)"/>
<circle cx="1169.6" cy="280" r="92.6" fill="none" stroke="#c03414" stroke-width="1.3"/>
<line x1="1169.5" y1="96" x2="1169.5" y2="188" stroke="#22227a" stroke-width="1.3"/>
<line x1="1169.5" y1="188" x2="1169.5" y2="465" stroke="#141414" stroke-width="1.3"/>
<line x1="985" y1="280.5" x2="1354" y2="280.5" stroke="#4cc010" stroke-width="1.3"/>
<circle cx="1169.5" cy="280.5" r="7.6" fill="none" stroke="#118811" stroke-width="2.6"/>
<line x1="1160" y1="280.5" x2="1179" y2="280.5" stroke="#118811" stroke-width="2.6"/>
<line x1="1169.5" y1="271" x2="1169.5" y2="290" stroke="#118811" stroke-width="2.6"/>
<line x1="983" y1="465.5" x2="1604" y2="465.5" stroke="#2a2a2a" stroke-width="1.2"/>
<line x1="1354.5" y1="465" x2="1354.5" y2="591" stroke="#2a2a2a" stroke-width="1.2"/>
<text x="1357.5" y="477.0" font-family="Liberation Sans" font-size="11" fill="#222">-2µm</text>
<text x="1357.5" y="499.2" font-family="Liberation Sans" font-size="11" fill="#222">-3µm</text>
<text x="1357.5" y="521.4" font-family="Liberation Sans" font-size="11" fill="#222">-4µm</text>
<text x="1357.5" y="543.6" font-family="Liberation Sans" font-size="11" fill="#222">-5µm</text>
<text x="1357.5" y="565.8" font-family="Liberation Sans" font-size="11" fill="#222">-6µm</text>
<text x="1357.5" y="588.0" font-family="Liberation Sans" font-size="11" fill="#222">-7µm</text>
<path d="M1354,465 L1415,375 L1404.5,370 L1522,196 L1527,191.5 L1532,189.5 L1540,188.5 L1543,188.5 L1542,182 L1604,96" fill="none" stroke="#1a1a9a" stroke-width="2" stroke-linejoin="round"/>
<path d="M983,524.7 L1074.6,524.7 L1074.6,519.8 L1117.6,519.8 L1117.6,520.8 L1142.3,520.8 L1142.3,521.8 L1182.9,521.8 L1182.9,522.8 L1259,522.8 L1259,533.6 L1263,533.6 L1265,531.3 L1271,531.3 L1271,529.7 L1353,529.7" fill="none" stroke="#1a701a" stroke-width="2.2"/>
</svg>
<!-- 3D area -->
<div class="a" style="left:983px;top:591px;width:621px;height:4px;background:#e0e0e0"></div>
<!--SURF--><svg class="a" style="left:983px;top:595px" width="621" height="494" viewBox="983 595 621 494">
<defs>
<linearGradient id="sg" gradientUnits="userSpaceOnUse" x1="1098.4" y1="592.1" x2="989.2" y2="1028.7"><stop offset="0.000" stop-color="#0828a0"/><stop offset="0.044" stop-color="#0a3cb0"/><stop offset="0.091" stop-color="#0a58b0"/><stop offset="0.133" stop-color="#0e7cb2"/><stop offset="0.164" stop-color="#1496ac"/><stop offset="0.211" stop-color="#12a08e"/><stop offset="0.260" stop-color="#10a065"/><stop offset="0.378" stop-color="#00a000"/><stop offset="0.491" stop-color="#48a000"/><stop offset="0.607" stop-color="#a4a800"/><stop offset="0.724" stop-color="#b07000"/><stop offset="0.838" stop-color="#b83000"/><stop offset="0.896" stop-color="#b01800"/><stop offset="1.000" stop-color="#a01000"/></linearGradient>
<linearGradient id="dg" gradientUnits="userSpaceOnUse" x1="1098.4" y1="576.1" x2="989.2" y2="1012.7"><stop offset="0.000" stop-color="#0828a0"/><stop offset="0.044" stop-color="#0a3cb0"/><stop offset="0.091" stop-color="#0a58b0"/><stop offset="0.133" stop-color="#0e7cb2"/><stop offset="0.164" stop-color="#1496ac"/><stop offset="0.211" stop-color="#12a08e"/><stop offset="0.260" stop-color="#10a065"/><stop offset="0.378" stop-color="#00a000"/><stop offset="0.491" stop-color="#48a000"/><stop offset="0.607" stop-color="#a4a800"/><stop offset="0.724" stop-color="#b07000"/><stop offset="0.838" stop-color="#b83000"/><stop offset="0.896" stop-color="#b01800"/><stop offset="1.000" stop-color="#a01000"/></linearGradient>
<linearGradient id="wg" x1="0" y1="0" x2="1" y2="0"><stop offset="0" stop-color="#c0d800"/><stop offset="0.35" stop-color="#eaea00"/><stop offset="0.6" stop-color="#d0e810"/><stop offset="1" stop-color="#50d020"/></linearGradient>
<pattern id="str" patternUnits="userSpaceOnUse" width="13" height="11" patternTransform="rotate(-27)"><rect x="0" y="0" width="13" height="1" fill="#000" fill-opacity="0.04"/><rect x="0" y="4" width="13" height="0.8" fill="#fff" fill-opacity="0.035"/><rect x="0" y="7.2" width="13" height="1.1" fill="#000" fill-opacity="0.03"/></pattern>
</defs>
<rect x="983" y="595" width="621" height="494" fill="#0b0b0b"/>
<polygon points="1093.5,611.5 1636.7,721.3 1555.5,1127.7 836.2,956.8" fill="url(#sg)"/>
<polygon points="1093.5,611.5 1636.7,721.3 1555.5,1127.7 836.2,956.8" fill="url(#str)"/>
<ellipse cx="1287" cy="839" rx="164" ry="98" transform="rotate(4 1286 828)" fill="url(#wg)"/>
<path d="M1286,932 A164,99 0 0 0 1450,834" transform="rotate(4 1286 828)" fill="none" stroke="#1e5a10" stroke-width="9" stroke-opacity="0.45" stroke-dasharray="1.1 2.3 1.6 1.9 1.5 3.5 0.7 4.3 0.7 3.9 0.7 2.0 1.3 6.0 0.8 2.7 1.6 6.7 1.5 3.7 2.2 1.8 2.0 3.1 0.8 2.1 1.1 6.0 0.9 4.7 1.6 3.5 1.5 1.8 0.7 2.6 1.7 3.9 1.1 4.7 1.3 3.1 1.9 5.3 1.0 4.7 1.4 6.3 1.8 3.1 2.2 2.1 1.3 5.7 0.8 4.2 0.7 5.2 1.8 4.7 2.0 3.2 1.7 4.8 1.5 4.0 1.9 6.7 1.4 5.2 0.7 5.4 1.6 7.0 1.9 3.1 1.2 5.2 0.6 4.0 0.9 2.1 0.7 5.7 0.8 2.9 1.2 6.3 0.7 4.0 1.5 6.4 1.9 6.3 1.0 3.8 1.2 6.4 2.1 2.3 0.9 2.8 1.0 4.2 1.5 2.9 0.6 3.8 1.2 4.6 2.1 5.3 1.4 4.9 1.7 1.8 2.0 5.8 2.0 5.9"/>
<path d="M1122,834 A164,99 0 0 0 1286,932" transform="rotate(4 1286 828)" fill="none" stroke="#607000" stroke-width="8" stroke-opacity="0.3" stroke-dasharray="1.1 8.0 0.7 10.3 0.7 4.7 0.9 5.6 1.1 4.5 0.6 5.5 0.7 7.6 0.6 12.7 1.5 5.5 1.0 7.5 1.1 5.2 1.8 13.9 1.3 8.8 0.7 5.0 1.1 6.6 1.8 5.6 0.6 13.5 1.3 5.5 1.4 4.3 1.3 13.8 1.8 11.0 1.0 7.7 0.8 11.7 1.3 11.8 1.1 6.2 1.7 13.8 1.8 12.1 1.7 11.4 0.9 9.2 1.1 4.3 0.6 6.8 1.0 10.9 1.9 8.5 1.9 13.9 1.9 7.6 0.9 6.3 0.9 6.0 1.5 13.0 1.8 8.8 1.5 12.0"/>
<ellipse cx="1286" cy="828" rx="164" ry="98" transform="rotate(4 1286 828)" fill="url(#dg)"/>
<path d="M1122,828 A164,98 0 0 1 1450,828" transform="rotate(4 1286 828)" fill="none" stroke="#0a2a14" stroke-width="1.4" stroke-opacity="0.4"/>
<path d="M1316,731 A164,98 0 0 1 1440,788" transform="rotate(4 1286 828)" fill="none" stroke="#a0f0e0" stroke-width="1.4" stroke-opacity="0.55"/>
<path d="M1130,798 Q1150,798 1158,807 Q1168,815 1177,813" fill="none" stroke="#1a6a1a" stroke-width="2.5" stroke-opacity="0.6"/>
<path d="M1130,797 Q1150,796 1158,805 Q1168,813 1177,811" fill="none" stroke="#80e040" stroke-width="1.6"/>
</svg><!--/SURF-->

<!-- right splitter -->
<div class="a" style="left:1604px;top:48px;width:4px;height:1089px;background:#cdcdcd"></div>
<div class="a" style="left:1604px;top:584px;width:4px;height:17px;background:#8f8f8f"></div>
<div class="a" style="left:979px;top:584px;width:4px;height:17px;background:#8f8f8f"></div>

<!-- bottom bar -->
<div class="a" style="left:48px;top:1089px;width:1556px;height:48px;background:#8a8a8a;border-top:2px solid #7e7e7e"></div>

<!-- right panel -->
<div class="a" style="left:1608px;top:48px;width:312px;height:1089px;background:#f3f3f3"></div>
<div class="t" style="left:1673px;top:64px;font-size:15px;color:#4a87c0">Auto Tune Image</div>
<div class="a" style="left:1644px;top:96px;width:240px;height:35px;background:#4488cc;border-radius:2px"></div>
<div class="t" style="left:1644px;top:107px;width:240px;text-align:center;font-size:15px;letter-spacing:-0.95px;font-weight:bold;color:#f0f8ff">MEASURE</div>
<div class="t" style="left:1644px;top:154px;font-size:12px;letter-spacing:-0.12px;color:#6a6a6a">Ready to measure</div>
<div class="t" style="left:1644px;top:213px;font-size:15px;color:#3c3c3c">Name:</div>
<div class="t" style="left:1740px;top:213px;font-size:15px;letter-spacing:-0.2px;color:#4a86b8">Result3911</div>
<div class="t" style="left:1644px;top:249px;font-size:15px;color:#3c3c3c">Folder:</div>
<div class="t" style="left:1739px;top:249px;font-size:15px;letter-spacing:-0.3px;color:#4a86b8">My Results</div>
<div class="t" style="left:1644px;top:285px;font-size:15px;color:#3c3c3c">Customer:</div>
<div class="t" style="left:1644px;top:318px;font-size:15px;color:#3c3c3c">Connector ID:</div>

<!-- horizontal splitter right -->
<div class="a" style="left:1608px;top:674px;width:312px;height:4px;background:#cfcfcf"></div>
<div class="a" style="left:1756px;top:674px;width:17px;height:3px;background:#8f8f8f"></div>
<div class="a" style="left:1608px;top:678px;width:312px;height:35px;background:#e1e1e1"></div>
<div class="a" style="left:1646px;top:687px;width:44px;height:18px;background:#3f87cf;border-radius:9px"></div>
<div class="a" style="left:1675px;top:690px;width:12px;height:12px;background:#eef4fb;border-radius:50%"></div>
<div class="t" style="left:1702px;top:689px;font-size:15px;letter-spacing:-0.2px;color:#444">Express Mode</div>

<div class="t" style="left:1644px;top:740.5px;font-size:24px;letter-spacing:-0.8px;color:#d0453a;-webkit-text-stroke:0.5px #d0453a">FAIL</div>
<svg class="a" style="left:1608px;top:678px" width="312" height="459"><polygon points="312,219 312,459 72,459" fill="#ff8a7c"/></svg>
<div class="t" style="left:1594px;top:776.6px;width:200px;text-align:right;font-size:14px;color:#3e3e3e;-webkit-text-stroke:0.25px #3e3e3e">Name:</div>
<div class="t" style="left:1800px;-webkit-text-stroke:0.15px #333;top:776.6px;font-size:14px;color:#333">Result3910</div>
<div class="t" style="left:1594px;top:801.6px;width:200px;text-align:right;font-size:14px;color:#3e3e3e;-webkit-text-stroke:0.25px #3e3e3e">Scan quality:</div>
<div class="t" style="left:1800px;-webkit-text-stroke:0.15px #333;top:801.6px;font-size:14px;color:#333">Ok</div>
<div class="t" style="left:1594px;top:826.6px;width:200px;text-align:right;font-size:14px;color:#3e3e3e;-webkit-text-stroke:0.25px #3e3e3e">Ferrule ROC, mm:</div>
<div class="t" style="left:1800px;-webkit-text-stroke:0.15px #333;top:826.6px;font-size:14px;color:#333">443.84 • FAIL</div>
<div class="t" style="left:1594px;top:851.6px;width:200px;text-align:right;font-size:14px;color:#3e3e3e;-webkit-text-stroke:0.25px #3e3e3e">Fiber Height, nm:</div>
<div class="t" style="left:1800px;-webkit-text-stroke:0.15px #333;top:851.6px;font-size:14px;color:#333">210.40 • FAIL</div>
<div class="t" style="left:1594px;top:876.6px;width:200px;text-align:right;font-size:14px;color:#3e3e3e;-webkit-text-stroke:0.25px #3e3e3e">Fiber Planar Height, nm:</div>
<div class="t" style="left:1800px;-webkit-text-stroke:0.15px #333;top:876.6px;font-size:14px;color:#333">215.75</div>
<div class="t" style="left:1594px;top:901.6px;width:200px;text-align:right;font-size:14px;color:#3e3e3e;-webkit-text-stroke:0.25px #3e3e3e">Apex Offset, µm:</div>
<div class="t" style="left:1800px;-webkit-text-stroke:0.15px #333;top:901.6px;font-size:14px;color:#333">10022.51 • FAIL</div>
<div class="t" style="left:1594px;top:926.6px;width:200px;text-align:right;font-size:14px;color:#3e3e3e;-webkit-text-stroke:0.25px #3e3e3e">Apex Offset Bearing, °:</div>
<div class="t" style="left:1800px;-webkit-text-stroke:0.15px #333;top:926.6px;font-size:14px;color:#333">269.65</div>
<div class="t" style="left:1594px;top:951.6px;width:200px;text-align:right;font-size:14px;color:#3e3e3e;-webkit-text-stroke:0.25px #3e3e3e">Ferrule Ra, nm:</div>
<div class="t" style="left:1800px;-webkit-text-stroke:0.15px #333;top:951.6px;font-size:14px;color:#333">1.74</div>
<div class="t" style="left:1594px;top:976.6px;width:200px;text-align:right;font-size:14px;color:#3e3e3e;-webkit-text-stroke:0.25px #3e3e3e">Fiber Ra, nm:</div>
<div class="t" style="left:1800px;-webkit-text-stroke:0.15px #333;top:976.6px;font-size:14px;color:#333">4.20</div>
<!--ICONS-->
<svg class="a" style="left:0;top:48px" width="48" height="400" viewBox="0 48 48 400" fill="#e0e0e0">
<path d="M14.2,73.2 L23.9,62.6 L33.8,73.2 L31.6,75.2 L23.9,66.8 L16.4,75.2 Z"/>
<path d="M16,81.8 L16,74.2 L23.9,67.9 L32.1,74.2 L32.1,81.8 L25.9,81.8 L25.9,77.1 L22.2,77.1 L22.2,81.8 Z"/>
<circle cx="24" cy="120.9" r="9.9" fill="none" stroke="#e0e0e0" stroke-width="2.2"/>
<circle cx="24" cy="120.9" r="5.85" fill="none" stroke="#e0e0e0" stroke-width="2.3"/>
<circle cx="24" cy="120.9" r="2" fill="none" stroke="#e0e0e0" stroke-width="2"/>
<path d="M13.9,163 L20.4,163 L16.2,166 L16.2,177 L13.9,176 Z"/>
<path d="M16.8,167.2 L23.6,163 L23.6,176.9 L16.8,180.6 Z"/>
<path d="M24.9,163 L32.4,163 Q33.9,163 33.9,164.5 L33.9,175.4 Q33.9,176.9 32.4,176.9 L24.9,176.9 Z"/>
<path d="M25.7,161.5 L31.1,158.6 L31.1,161.5 Z"/>
<rect x="15" y="211.9" width="9.9" height="2.2"/><rect x="27.2" y="211.9" width="5.9" height="2.2"/><rect x="27.2" y="209.9" width="1.9" height="6.1"/>
<rect x="15" y="217.9" width="6" height="2.2"/><rect x="19.1" y="216.1" width="1.9" height="5.9"/><rect x="23.1" y="217.9" width="10" height="2.2"/>
<rect x="15" y="223.9" width="6" height="2.2"/><rect x="23" y="222" width="1.9" height="6"/><rect x="23" y="223.9" width="10.1" height="2.2"/>
<path d="M14,272.7 L14,260 Q14,257.9 16,257.9 L27.2,257.9" fill="none" stroke="#e0e0e0" stroke-width="2.2"/>
<rect x="19.1" y="262.9" width="14.1" height="12.2" rx="1.8" fill="none" stroke="#e0e0e0" stroke-width="2.2"/>
<g transform="translate(26,269)"><circle r="3.1"/><rect x="-0.9" y="-4.8" width="1.8" height="9.6"/><rect x="-4.8" y="-0.9" width="9.6" height="1.8"/><rect x="-0.9" y="-4.8" width="1.8" height="9.6" transform="rotate(45)"/><rect x="-0.9" y="-4.8" width="1.8" height="9.6" transform="rotate(-45)"/><circle r="1.5" fill="#323232"/></g>
<g transform="translate(21,314)"><circle r="5"/><rect x="-1.6" y="-7" width="3.2" height="14"/><rect x="-1.6" y="-7" width="3.2" height="14" transform="rotate(60)"/><rect x="-1.6" y="-7" width="3.2" height="14" transform="rotate(120)"/><circle r="1.8" fill="#323232"/></g>
<g transform="translate(29,323) rotate(30)"><circle r="3.4"/><rect x="-1.1" y="-4.8" width="2.2" height="9.6"/><rect x="-1.1" y="-4.8" width="2.2" height="9.6" transform="rotate(60)"/><rect x="-1.1" y="-4.8" width="2.2" height="9.6" transform="rotate(120)"/><circle r="1.1" fill="#323232"/></g>
<circle cx="20" cy="362" r="3.2"/><circle cx="28" cy="362" r="3.2"/>
<path d="M12.9,373.2 L12.9,371.5 Q13.5,367 20,367 Q26.6,367 27.2,371.5 L27.2,373.2 Z"/>
<path d="M28.2,367 Q34.6,367.4 35.2,371.5 L35.2,373.2 L28.6,373.2 L28.6,371.2 Q28.6,368.6 27.4,367.3 Z"/>
<circle cx="24" cy="414.6" r="11"/>
<circle cx="24" cy="414.6" r="4.4" fill="#323232"/>
<g stroke="#323232" stroke-width="1.4"><line x1="15.5" y1="406.1" x2="32.5" y2="423.1"/><line x1="32.5" y1="406.1" x2="15.5" y2="423.1"/></g>
</svg>
<svg class="a" style="left:0;top:1090px" width="120" height="47" viewBox="0 1090 120 47">
<circle cx="24" cy="1113" r="11" fill="#e0e0e0"/>
<circle cx="24" cy="1108.3" r="3.1" fill="#323232"/>
<path d="M17.7,1117.6 Q24,1112 30.3,1117.6 Q24,1123 17.7,1117.6 Z" fill="#323232"/>
<g fill="none" stroke="#e6e6e6" stroke-width="1.8">
<circle cx="84" cy="1113.1" r="11.1" stroke-width="2"/>
<line x1="82.36" y1="1111.91" x2="94.81" y2="1111.04"/><line x1="84.21" y1="1111.09" x2="91.19" y2="1121.43"/><line x1="85.85" y1="1112.28" x2="80.38" y2="1123.49"/><line x1="85.64" y1="1114.29" x2="73.19" y2="1115.16"/><line x1="83.79" y1="1115.11" x2="76.81" y2="1104.77"/><line x1="82.15" y1="1113.92" x2="87.62" y2="1102.71"/></g>
</svg>
<svg class="a" style="left:1496px;top:1093px" width="94" height="40" viewBox="1496 1093 94 40">
<circle cx="1519" cy="1113.1" r="11" fill="none" stroke="#f0f0f0" stroke-width="1.9"/>
<path d="M1514.2,1107 L1524,1107 L1524,1108.6 L1517.6,1108.6 L1521,1113 L1517.4,1117.4 L1524.2,1117.4 L1524.2,1119 L1514.2,1119 L1514.2,1118 L1518.8,1113 L1514.2,1108 Z" fill="#f0f0f0"/>
<circle cx="1568" cy="1113.1" r="11" fill="none" stroke="#f0f0f0" stroke-width="1.9"/>
<g transform="translate(1568,1113.1)" fill="#f0f0f0"><circle r="4.6"/><rect x="-1.7" y="-6.7" width="3.4" height="13.4"/><rect x="-1.7" y="-6.7" width="3.4" height="13.4" transform="rotate(60)"/><rect x="-1.7" y="-6.7" width="3.4" height="13.4" transform="rotate(120)"/><circle r="1.3" fill="#8a8a8a"/></g>
</svg>
<svg class="a" style="left:1640px;top:56px" width="32" height="32" viewBox="1640 56 32 32">
<rect x="1648" y="64" width="16" height="16" fill="#555"/>
<rect x="1648" y="64" width="16" height="16" fill="#555" transform="rotate(45 1656 72)"/>
<path d="M1651.6,76 L1654.6,66.8 L1657.4,66.8 L1660.4,76 L1658.3,76 L1657.6,73.6 L1654.4,73.6 L1653.7,76 Z M1654.9,72 L1657.1,72 L1656,68.6 Z" fill="#fff"/>
</svg>
<svg class="a" style="left:1886px;top:244px" width="30" height="24" viewBox="1886 244 30 24">
<path d="M1893,249 L1899,249 L1900.5,250.5 L1910.9,250.5 L1910.9,262.6 L1893,262.6 Z" fill="none" stroke="#444" stroke-width="1.8" stroke-linejoin="round"/>
<line x1="1893" y1="252.2" x2="1910.9" y2="252.2" stroke="#444" stroke-width="1.2"/>
</svg>
<svg class="a" style="left:1850px;top:682px" width="66" height="28" viewBox="1850 682 66 28">
<path d="M1863.9,688 L1859,688 Q1857.1,688 1857.1,690 L1857.1,702 Q1857.1,703.9 1859,703.9 L1871,703.9 Q1873,703.9 1873,702 L1873,697.1" fill="none" stroke="#444" stroke-width="1.8"/>
<path d="M1866.2,688 L1873,688 L1873,694.6" fill="none" stroke="#444" stroke-width="1.8"/>
<line x1="1861.7" y1="699" x2="1872.5" y2="688.5" stroke="#444" stroke-width="1.8"/>
<rect x="1893" y="690" width="18" height="1.9" fill="#444"/><rect x="1893" y="695" width="18" height="1.9" fill="#444"/><rect x="1893" y="700" width="18" height="1.9" fill="#444"/>
</svg>
<!--/ICONS-->

</body></html>
